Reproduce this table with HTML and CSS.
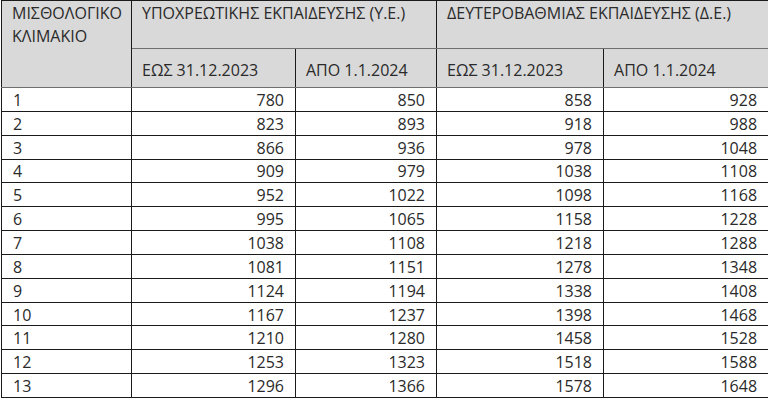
FILE: index.html
```html
<!DOCTYPE html>
<html lang="el">
<head>
<meta charset="utf-8">
<link rel="stylesheet" href="styles.css">
</head>
<body>
<table class="pay">
  <colgroup>
    <col class="c1"><col class="c2"><col class="c3"><col class="c4"><col class="c5">
  </colgroup>
  <thead>
    <tr class="h1">
      <th rowspan="2" class="lvl">ΜΙΣΘΟΛΟΓΙΚΟ<br>ΚΛΙΜΑΚΙΟ</th>
      <th colspan="2" class="grp">ΥΠΟΧΡΕΩΤΙΚΗΣ ΕΚΠΑΙΔΕΥΣΗΣ (Υ.Ε.)</th>
      <th colspan="2" class="grp">ΔΕΥΤΕΡΟΒΑΘΜΙΑΣ ΕΚΠΑΙΔΕΥΣΗΣ (Δ.Ε.)</th>
    </tr>
    <tr class="h2">
      <th>ΕΩΣ 31.12.2023</th><th>ΑΠΟ 1.1.2024</th>
      <th>ΕΩΣ 31.12.2023</th><th>ΑΠΟ 1.1.2024</th>
    </tr>
  </thead>
  <tbody>
    <tr><td>1</td><td>780</td><td>850</td><td>858</td><td>928</td></tr>
    <tr><td>2</td><td>823</td><td>893</td><td>918</td><td>988</td></tr>
    <tr><td>3</td><td>866</td><td>936</td><td>978</td><td>1048</td></tr>
    <tr><td>4</td><td>909</td><td>979</td><td>1038</td><td>1108</td></tr>
    <tr><td>5</td><td>952</td><td>1022</td><td>1098</td><td>1168</td></tr>
    <tr><td>6</td><td>995</td><td>1065</td><td>1158</td><td>1228</td></tr>
    <tr><td>7</td><td>1038</td><td>1108</td><td>1218</td><td>1288</td></tr>
    <tr><td>8</td><td>1081</td><td>1151</td><td>1278</td><td>1348</td></tr>
    <tr><td>9</td><td>1124</td><td>1194</td><td>1338</td><td>1408</td></tr>
    <tr><td>10</td><td>1167</td><td>1237</td><td>1398</td><td>1468</td></tr>
    <tr><td>11</td><td>1210</td><td>1280</td><td>1458</td><td>1528</td></tr>
    <tr><td>12</td><td>1253</td><td>1323</td><td>1518</td><td>1588</td></tr>
    <tr><td>13</td><td>1296</td><td>1366</td><td>1578</td><td>1648</td></tr>
  </tbody>
</table>
</body>
</html>
```
FILE: styles.css
```css
html, body {
  margin: 0;
  padding: 0;
  background: #ffffff;
}
body {
  padding: 0 0 0 1px;
}
.pay {
  border-collapse: collapse;
  table-layout: fixed;
  width: 767px;
  font-family: "Open Sans", "Noto Sans", sans-serif;
  font-size: 16px;
  color: #2a2a2a;
}
.c1 { width: 130px; }
.c2 { width: 164px; }
.c3 { width: 141px; }
.c4 { width: 167px; }
.c5 { width: 165px; }
.pay th, .pay td {
  box-sizing: border-box;
  border: 1px solid #1a1a1a;
  padding: 0 10px;
  font-weight: normal;
  text-align: left;
  overflow: hidden;
  white-space: nowrap;
}
.pay thead th {
  background: #d9d9d9;
  border-color: #6e6e6e;
  border-left-color: #1a1a1a;
  border-right-color: #1a1a1a;
}
.pay .h1 { height: 48px; }
.pay .h1 th {
  vertical-align: top;
  padding-top: 1px;
  line-height: 23px;
  border-top-color: #1a1a1a;
}
.pay .h2 { height: 39px; }
.pay .h2 th {
  vertical-align: middle;
  line-height: 20px;
  padding-top: 4px;
}
.pay tbody tr { height: 23.85px; }
.pay tbody td {
  line-height: 20px;
  padding-top: 1px;
  padding-bottom: 0;
  text-align: right;
  padding-right: 11px;
}
.pay tbody td:first-child {
  text-align: left;
  padding-left: 11px;
}
```
